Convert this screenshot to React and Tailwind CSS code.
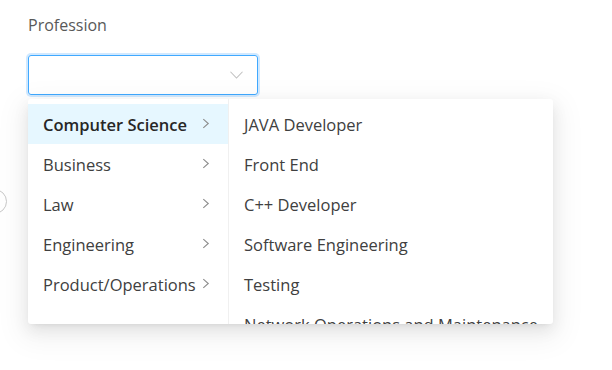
import React from 'react';

const categories = ['Computer Science', 'Business', 'Law', 'Engineering', 'Product/Operations'];
const jobs = ['JAVA Developer', 'Front End', 'C++ Developer', 'Software Engineering', 'Testing', 'Network Operations and Maintenance'];

function Chevron({ className }) {
    return (
        <svg viewBox="0 0 10 10" className={className} fill="none" stroke="currentColor" strokeWidth="1">
            <path d="M3 1 L7.5 5 L3 9" />
        </svg>
    );
}

export default function App() {
    return (
        <div className="relative w-[612px] h-[370px] bg-white overflow-hidden font-['Open_Sans',sans-serif]">
            {/* partly hidden radio behind the popup */}
            <div className="absolute left-[-18px] top-[189px] w-[25px] h-[25px] rounded-full border border-[#c8c8c8]" />

            <div className="pl-[28px] pt-[13px]">
                <div className="text-[16px] leading-[24px] text-[#595959]">Profession</div>
                <div className="mt-[18px] w-[230px] h-[40px] rounded-[3px] border border-[#40a9ff] shadow-[0_0_0_2px_rgba(24,144,255,0.2)] flex items-center justify-end pr-[14px]">
                    <svg viewBox="0 0 14 8" className="w-[13px] h-[8px] text-[#bfbfbf]" fill="none" stroke="currentColor" strokeWidth="1.1">
                        <path d="M0.5 0.5 L7 7.3 L13.5 0.5" />
                    </svg>
                </div>
            </div>

            <div className="absolute left-[28px] top-[99px] w-[525px] h-[225px] bg-white rounded-[3px] flex shadow-[0_3px_6px_-4px_rgba(0,0,0,0.12),0_6px_16px_0_rgba(0,0,0,0.08),0_9px_28px_8px_rgba(0,0,0,0.05)]">
                <ul className="w-[201px] h-full pt-[5px] border-r border-[#f0f0f0] overflow-hidden">
                    {categories.map((c, i) => (
                        <li
                            key={c}
                            className={`h-[40px] flex items-center pl-[15px] pr-[17px] pt-[2px] text-[16.5px] ${i === 0 ? 'bg-[#e6f7ff] font-semibold text-[#262626]' : 'text-[#404040]'}`}
                        >
                            <span className="flex-1 whitespace-nowrap">{c}</span>
                            <Chevron className="w-[11px] h-[11px] text-[#8c8c8c] mb-[3px]" />
                        </li>
                    ))}
                </ul>
                <ul className="flex-1 h-full pt-[5px] overflow-hidden">
                    {jobs.map((j) => (
                        <li key={j} className="h-[40px] flex items-center pl-[15px] pt-[2px] text-[16.5px] text-[#404040] whitespace-nowrap">
                            {j}
                        </li>
                    ))}
                </ul>
            </div>
        </div>
    );
}
